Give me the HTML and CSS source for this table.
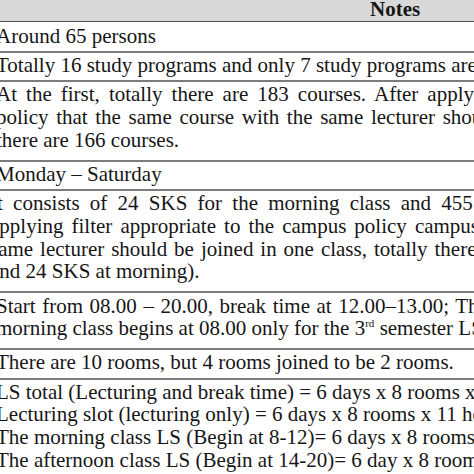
FILE: index.html
```html
<!DOCTYPE html>
<html>
<head>
<meta charset="utf-8">
<link rel="stylesheet" href="styles.css">
</head>
<body>
<div class="table">
  <div class="head"><span class="head-title">Notes</span></div>
  <div class="row first">
    <span class="ln">Around 65 persons</span>
  </div>
  <div class="row">
    <span class="ln">Totally 16 study programs and only 7 study programs are involved.</span>
  </div>
  <div class="row multi">
    <span class="ln ws-a">At the first, totally there are 183 courses. After applying</span>
    <span class="ln ws-b">policy that the same course with the same lecturer should</span>
    <span class="ln">there are 166 courses.</span>
  </div>
  <div class="row">
    <span class="ln">Monday – Saturday</span>
  </div>
  <div class="row multi shifted">
    <span class="ln ws-c">It consists of 24 SKS for the morning class and 455 SKS for</span>
    <span class="ln ws-d">applying filter appropriate to the campus policy campus that</span>
    <span class="ln ws-e">same lecturer should be joined in one class, totally there are</span>
    <span class="ln">and 24 SKS at morning).</span>
  </div>
  <div class="row multi">
    <span class="ln ws-f">Start from 08.00 – 20.00, break time at 12.00–13.00; The</span>
    <span class="ln">morning class begins at 08.00 only for the 3<span class="sup">rd</span> semester LS</span>
  </div>
  <div class="row">
    <span class="ln">There are 10 rooms, but 4 rooms joined to be 2 rooms.</span>
  </div>
  <div class="row multi">
    <span class="ln">LS total (Lecturing and break time) = 6 days x 8 rooms x 13 hours</span>
    <span class="ln">Lecturing slot (lecturing only) = 6 days x 8 rooms x 11 hours</span>
    <span class="ln">The morning class LS (Begin at 8-12)= 6 days x 8 rooms x 4 hours</span>
    <span class="ln">The afternoon class LS (Begin at 14-20)= 6 day x 8 rooms x 6 hours</span>
  </div>
</div>
</body>
</html>
```
FILE: styles.css
```css
html, body {
  margin: 0;
  padding: 0;
  background: #ffffff;
}
body {
  width: 474px;
  height: 474px;
  overflow: hidden;
}
.table {
  margin-left: -4px;
  width: 540px;
  font-family: "Liberation Serif", "Times New Roman", serif;
  font-size: 21px;
  line-height: 22.7px;
  color: #161616;
}
.head {
  height: 22px;
  box-sizing: border-box;
  background: #d9d9d9;
  border-bottom: 1px solid #4f4f4f;
  padding-left: 374px;
  line-height: 19px;
}
.head-title {
  font-weight: bold;
}
.row {
  border-top: 2px solid #7c7c7c;
  padding: 1.2px 0 3.5px;
}
.row.first {
  border-top: none;
  padding: 3.2px 0 3px;
}
.row.multi {
  padding-bottom: 8.2px;
}
.row.shifted {
  margin-left: -6px;
}
.ln {
  display: block;
  white-space: nowrap;
}
.ws-a { word-spacing: 3.8px; }
.ws-b { word-spacing: 2.4px; }
.ws-c { word-spacing: 5px; }
.ws-d { word-spacing: 2.8px; }
.ws-e { word-spacing: 1.7px; }
.ws-f { word-spacing: 1.3px; }
.sup {
  font-size: 11px;
  vertical-align: 8px;
  line-height: 0;
}
```
